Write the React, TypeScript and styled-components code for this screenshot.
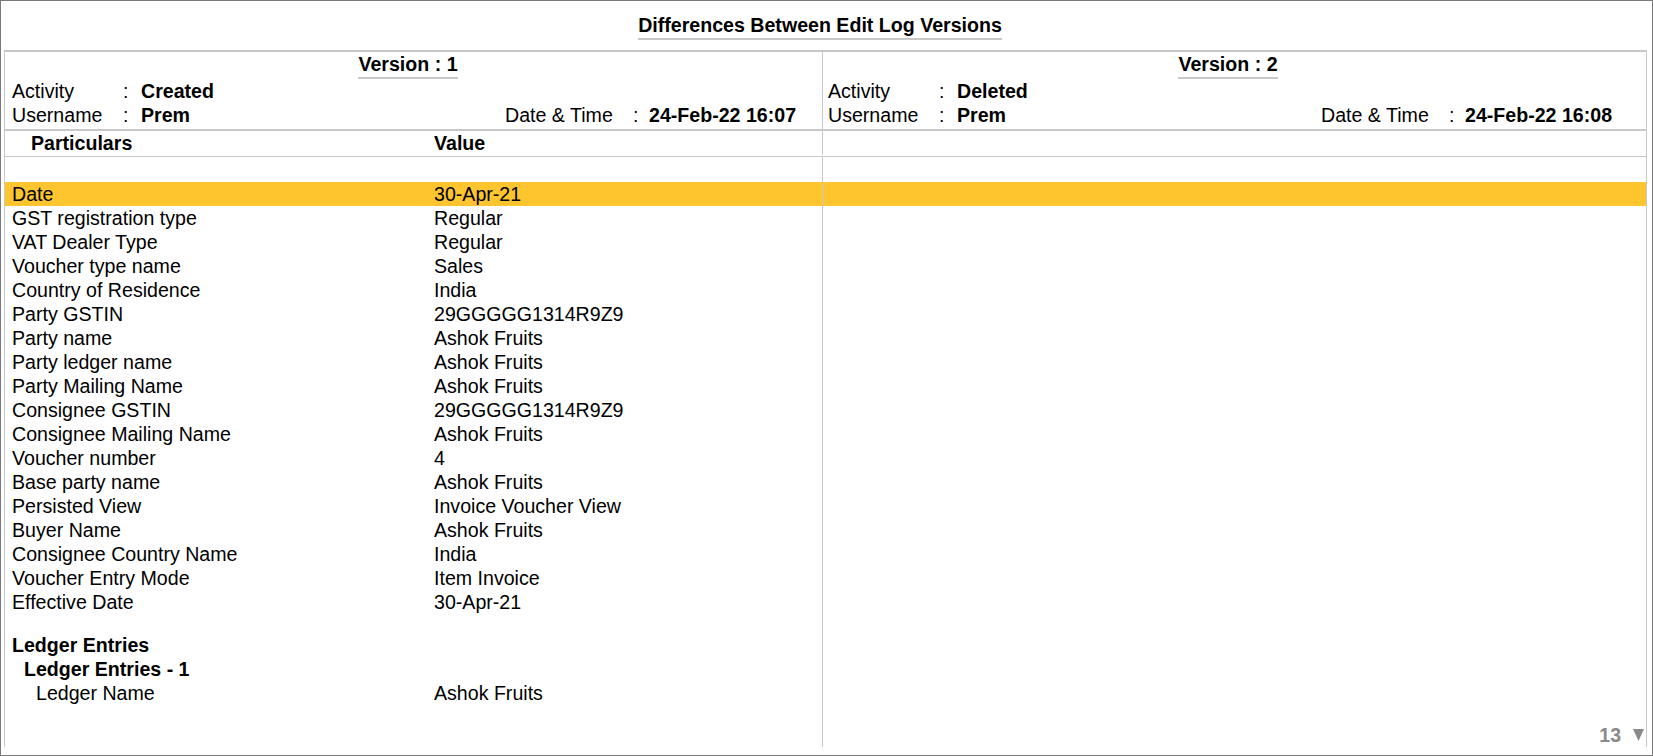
import React from "react";
import styled, { createGlobalStyle } from "styled-components";

const LINE = "#c8c8c8";
const CURSOR = "#fec52f";

const GlobalStyle = createGlobalStyle`
  html, body {
    margin: 0;
    padding: 0;
    background: #ffffff;
  }
  body {
    font-family: "Liberation Sans", Arial, sans-serif;
    color: #000000;
  }
  * {
    box-sizing: border-box;
  }
`;

const Window = styled.div`
  width: 1653px;
  height: 756px;
  border: 1px solid #7a7a7a;
  display: flex;
  flex-direction: column;
  font-size: 19.6px;
  line-height: 24px;
  overflow: hidden;
`;

const TitleBar = styled.div`
  height: 49px;
  padding: 12px 13px 0 0;
  text-align: center;
`;

const Underlined = styled.span`
  display: inline-block;
  font-weight: bold;
  padding-bottom: 1px;
  border-bottom: 2px solid ${LINE};
`;

const Panel = styled.div`
  flex: 1;
  margin: 0 5px 8px 3px;
  border: 1px solid ${LINE};
  border-top-width: 2px;
  border-bottom: none;
  display: flex;
  flex-direction: column;
`;

const Split = styled.div<{ $cursor?: boolean; $rule?: number; $height?: number; $grow?: boolean }>`
  display: grid;
  grid-template-columns: 818px 1fr;
  flex: ${p => (p.$grow ? 1 : "none")};
  height: ${p => (p.$height ? `${p.$height}px` : "auto")};
  background: ${p => (p.$cursor ? CURSOR : "transparent")};
  border-bottom: ${p => (p.$rule ? `${p.$rule}px solid ${LINE}` : "none")};
`;

const Side = styled.div<{ $left?: boolean }>`
  border-right: ${p => (p.$left ? `1px solid ${LINE}` : "none")};
  min-width: 0;
`;

const VersionBlock = styled(Side)`
  display: flex;
  flex-direction: column;
  padding: 0 0 2px ${p => (p.$left ? 7 : 5)}px;
`;

const VersionHeading = styled.div`
  text-align: center;
  padding-right: 18px;
`;

const Info = styled.div`
  display: grid;
  grid-template-columns: 111px 18px 364px 128px 16px auto;
  grid-auto-rows: 24px;
  white-space: nowrap;
`;

const InfoValue = styled.span`
  font-weight: bold;
`;

const Fields = styled(Side)`
  display: grid;
  grid-template-columns: 429px 1fr;
  white-space: nowrap;
`;

const Label = styled.span<{ $indent?: number; $bold?: boolean }>`
  padding-left: ${p => p.$indent ?? 7}px;
  font-weight: ${p => (p.$bold ? "bold" : "normal")};
`;

const HeadRow = styled(Split)`
  padding-bottom: 1px;
  font-weight: bold;
`;

const PagerCell = styled(Side)`
  display: flex;
  align-items: flex-end;
  justify-content: flex-end;
  padding: 0 2px 2px 0;
`;

const Pager = styled.div`
  display: flex;
  align-items: center;
  gap: 12px;
  font-size: 19.5px;
  line-height: 20px;
  font-weight: bold;
  color: #8a8a8a;
`;

type Version = {
  no: number;
  activity: string;
  user: string;
  stamp: string;
};

const versions: Version[] = [
  { no: 1, activity: "Created", user: "Prem", stamp: "24-Feb-22 16:07" },
  { no: 2, activity: "Deleted", user: "Prem", stamp: "24-Feb-22 16:08" },
];

const fields: [string, string][] = [
  ["Date", "30-Apr-21"],
  ["GST registration type", "Regular"],
  ["VAT Dealer Type", "Regular"],
  ["Voucher type name", "Sales"],
  ["Country of Residence", "India"],
  ["Party GSTIN", "29GGGGG1314R9Z9"],
  ["Party name", "Ashok Fruits"],
  ["Party ledger name", "Ashok Fruits"],
  ["Party Mailing Name", "Ashok Fruits"],
  ["Consignee GSTIN", "29GGGGG1314R9Z9"],
  ["Consignee Mailing Name", "Ashok Fruits"],
  ["Voucher number", "4"],
  ["Base party name", "Ashok Fruits"],
  ["Persisted View", "Invoice Voucher View"],
  ["Buyer Name", "Ashok Fruits"],
  ["Consignee Country Name", "India"],
  ["Voucher Entry Mode", "Item Invoice"],
  ["Effective Date", "30-Apr-21"],
];

const ledger: { label: string; value?: string; indent: number; bold?: boolean }[] = [
  { label: "Ledger Entries", indent: 7, bold: true },
  { label: "Ledger Entries - 1", indent: 19, bold: true },
  { label: "Ledger Name", value: "Ashok Fruits", indent: 31 },
];

const DownArrow = () => (
  <svg width="11" height="12" viewBox="0 0 11 12">
    <polygon points="0,0 11,0 5.5,12" fill="#8a8a8a" />
  </svg>
);

const VersionInfo = ({ v, left }: { v: Version; left?: boolean }) => (
  <VersionBlock $left={left}>
    <VersionHeading>
      <Underlined>Version : {v.no}</Underlined>
    </VersionHeading>
    <Info>
      <span>Activity</span>
      <span>:</span>
      <InfoValue style={{ gridColumn: "3 / 7" }}>{v.activity}</InfoValue>
      <span>Username</span>
      <span>:</span>
      <InfoValue>{v.user}</InfoValue>
      <span>Date &amp; Time</span>
      <span>:</span>
      <InfoValue>{v.stamp}</InfoValue>
    </Info>
  </VersionBlock>
);

export default function App() {
  return (
    <>
      <GlobalStyle />
      <Window>
        <TitleBar>
          <Underlined>Differences Between Edit Log Versions</Underlined>
        </TitleBar>
        <Panel>
          <Split $rule={2}>
            <VersionInfo v={versions[0]} left />
            <VersionInfo v={versions[1]} />
          </Split>

          <HeadRow $rule={1}>
            <Fields $left>
              <Label $indent={26} $bold>
                Particulars
              </Label>
              <span>Value</span>
            </Fields>
            <Side />
          </HeadRow>

          <Split $height={25}>
            <Side $left />
            <Side />
          </Split>

          {fields.map(([label, value], i) => (
            <Split key={label} $height={24} $cursor={i === 0}>
              <Fields $left>
                <Label>{label}</Label>
                <span>{value}</span>
              </Fields>
              <Side />
            </Split>
          ))}

          <Split $height={19}>
            <Side $left />
            <Side />
          </Split>

          {ledger.map(item => (
            <Split key={item.label} $height={24}>
              <Fields $left>
                <Label $indent={item.indent} $bold={item.bold}>
                  {item.label}
                </Label>
                <span>{item.value}</span>
              </Fields>
              <Side />
            </Split>
          ))}

          <Split $grow>
            <Side $left />
            <PagerCell>
              <Pager>
                <span>13</span>
                <DownArrow />
              </Pager>
            </PagerCell>
          </Split>
        </Panel>
      </Window>
    </>
  );
}
